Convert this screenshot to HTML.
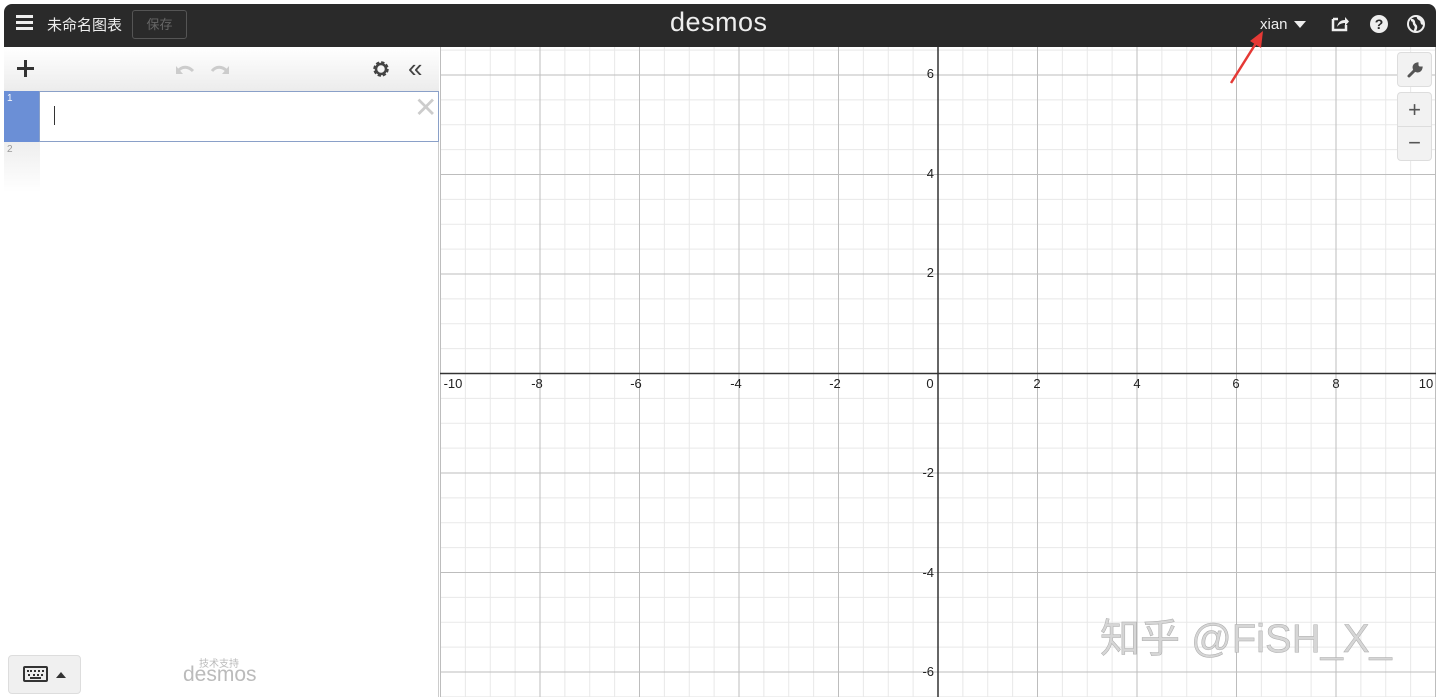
<!DOCTYPE html>
<html><head><meta charset="utf-8"><style>
*{margin:0;padding:0;box-sizing:border-box}
body{width:1440px;height:697px;overflow:hidden;background:#fff;font-family:"Liberation Sans","Noto Sans CJK SC",sans-serif;position:relative}
.top{position:absolute;left:4px;top:4px;width:1432px;height:43px;background:#2a2a2a;border-radius:8px 8px 0 0}
.left{position:absolute;left:4px;top:47px;width:435px;height:650px;background:#fff;border-right:1px solid #ccc}
.tb{position:absolute;left:0;top:0;width:435px;height:44px;background:linear-gradient(#fff,#ececec)}
.graph{position:absolute;left:440px;top:47px;width:996px;height:650px}
</style></head><body>
<div class="top">
  <div style="position:absolute;left:12px;top:11px;width:17px;height:3px;background:#eee;box-shadow:0 6px 0 #eee,0 12px 0 #eee"></div>
  <div style="position:absolute;left:43px;top:10px;color:#eee;font-size:15px">未命名图表</div>
  <div style="position:absolute;left:128px;top:6px;width:55px;height:29px;border:1px solid #555;border-radius:3px;color:#666;font-size:13px;text-align:center;line-height:27px">保存</div>
  <div style="position:absolute;left:666px;top:3px;color:#eee;font-size:27px;letter-spacing:0.5px">desmos</div>
  <div style="position:absolute;left:1256px;top:12px;color:#eee;font-size:15px">xian</div>
  <div style="position:absolute;left:1290px;top:17px;border-left:6px solid transparent;border-right:6px solid transparent;border-top:7px solid #eee"></div>
  <svg style="position:absolute;left:1326px;top:10px" width="20" height="20" viewBox="0 0 20 20"><path d="M3 5h5M3 5v11h13v-5" stroke="#eee" stroke-width="2.5" fill="none"/><path d="M7 13c1-5 4-7 8-7V3l4 4.5-4 4.5V9c-3 0-6 1-8 4z" fill="#eee"/></svg>
  <svg style="position:absolute;left:1365px;top:10px" width="20" height="20"><circle cx="10" cy="10" r="9" fill="#eee"/><text x="10" y="15" text-anchor="middle" font-size="14" font-weight="bold" fill="#2a2a2a" font-family="Liberation Sans">?</text></svg>
  <svg style="position:absolute;left:1402px;top:10px" width="20" height="20"><circle cx="10" cy="10" r="8" fill="none" stroke="#eee" stroke-width="2"/><path d="M5 6c2 0 3 1 3 3s2 2 2 4-1 3-1 4M12 3c0 2 2 2 3 3s0 3 2 4" stroke="#eee" stroke-width="2.5" fill="none"/></svg>
</div>
<div class="left">
  <div class="tb">
    <div style="position:absolute;left:13px;top:20px;width:17px;height:3px;background:#333"></div>
    <div style="position:absolute;left:20px;top:13px;width:3px;height:17px;background:#333"></div>
    <svg style="position:absolute;left:170px;top:12px" width="60" height="20"><path d="M4 12c4-5 10-5 15 0" stroke="#ccc" stroke-width="3" fill="none"/><path d="M2 7v8h7z" fill="#ccc"/><path d="M38 12c4-5 10-5 15 0" stroke="#ccc" stroke-width="3" fill="none"/><path d="M55 7v8h-7z" fill="#ccc"/></svg>
    <svg style="position:absolute;left:368px;top:13px" width="18" height="18" viewBox="0 0 18 18"><circle cx="9" cy="9" r="6" fill="none" stroke="#444" stroke-width="3.5" stroke-dasharray="3 1.7"/><circle cx="9" cy="9" r="5" fill="none" stroke="#444" stroke-width="2.5"/></svg>
    <div style="position:absolute;left:404px;top:6px;color:#444;font-size:26px">«</div>
  </div>
  <div style="position:absolute;left:0;top:44px;width:36px;height:51px;background:#6b8fd6"></div>
  <div style="position:absolute;left:3px;top:46px;color:#fff;font-size:10px">1</div>
  <div style="position:absolute;left:35px;top:44px;width:400px;height:51px;border:1px solid #8aa0c8;background:#fff"></div>
  <div style="position:absolute;left:50px;top:59px;width:1px;height:19px;background:#333"></div>
  <div style="position:absolute;left:410px;top:44px;color:#ccc;font-size:28px">✕</div>
  <div style="position:absolute;left:0;top:95px;width:36px;height:50px;background:linear-gradient(#eee,#fff)"></div>
  <div style="position:absolute;left:3px;top:97px;color:#999;font-size:10px">2</div>
  <div style="position:absolute;left:4px;top:608px;width:73px;height:39px;background:#f0f0f0;border:1px solid #ddd;border-radius:4px"></div>
  <div style="position:absolute;left:19px;top:619px;width:25px;height:16px;border:2px solid #333;border-radius:2px;background:#eee">
    <div style="margin:2px 2px 0;height:2px;border-top:2px dotted #333"></div>
    <div style="margin:2px 3px 0;height:2px;border-top:2px dotted #333"></div>
    <div style="margin:1px 5px 0;height:2px;background:#333"></div>
  </div>
  <div style="position:absolute;left:52px;top:625px;border-left:5px solid transparent;border-right:5px solid transparent;border-bottom:6px solid #333"></div>
  <div style="position:absolute;left:195px;top:608px;color:#bbb;font-size:10px">技术支持</div>
  <div style="position:absolute;left:179px;top:616px;color:#bbb;font-size:21px">desmos</div>
</div>
<svg class="graph" width="996" height="650" viewBox="440 47 996 650">
  <defs>
    <pattern id="mn" x="937.5" y="373" width="24.875" height="24.875" patternUnits="userSpaceOnUse"><path d="M0.5 0V24.875M0 0.5H24.875" stroke="#e8e8e8" stroke-width="1"/></pattern>
    <pattern id="mj" x="937.5" y="373" width="99.5" height="99.5" patternUnits="userSpaceOnUse"><path d="M0.5 0V99.5M0 0.5H99.5" stroke="#bdbdbd" stroke-width="1"/></pattern>
  </defs>
  <rect x="440" y="47" width="996" height="650" fill="#fff"/>
  <rect x="440" y="47" width="996" height="650" fill="url(#mn)"/>
  <rect x="440" y="47" width="996" height="650" fill="url(#mj)"/>
  <line x1="440" y1="373.5" x2="1436" y2="373.5" stroke="#333" stroke-width="1.5"/>
  <line x1="938" y1="47" x2="938" y2="697" stroke="#333" stroke-width="1.5"/>
  <g font-family="Liberation Sans" font-size="13" fill="#222" text-anchor="middle">
    <text x="453" y="388">-10</text><text x="537" y="388">-8</text><text x="636" y="388">-6</text><text x="736" y="388">-4</text><text x="835" y="388">-2</text><text x="930" y="388">0</text><text x="1037" y="388">2</text><text x="1137" y="388">4</text><text x="1236" y="388">6</text><text x="1336" y="388">8</text><text x="1426" y="388">10</text>
  </g>
  <g font-family="Liberation Sans" font-size="13" fill="#222" text-anchor="end">
    <text x="934" y="78">6</text><text x="934" y="178">4</text><text x="934" y="277">2</text><text x="934" y="477">-2</text><text x="934" y="577">-4</text><text x="934" y="676">-6</text>
  </g>
  <text x="1100" y="652" font-family="Liberation Sans,Noto Sans CJK SC,sans-serif" font-size="40" fill="#d6d6d6" stroke="#aaa" stroke-width="0.5">知乎 @FiSH_X_</text>
</svg>
<svg style="position:absolute;left:1220px;top:25px" width="50" height="65"><path d="M11 58L38 15" stroke="#e53935" stroke-width="2.5"/><path d="M43 6l-2 17-11-7z" fill="#e53935"/></svg>
<div style="position:absolute;left:1397px;top:52px;width:35px;height:35px;background:#f2f2f2;border:1px solid #ddd;border-radius:4px;color:#555;font-size:18px;text-align:center;line-height:33px">
<svg width="18" height="18" viewBox="0 0 18 18" style="vertical-align:middle"><path d="M3 15l7-7M11 3a3.5 3.5 0 1 0 4 4l-2 0-2-2z" stroke="#555" stroke-width="3" fill="#555" stroke-linecap="round"/></svg></div>
<div style="position:absolute;left:1397px;top:92px;width:35px;height:69px;background:#f2f2f2;border:1px solid #ddd;border-radius:4px;color:#555;font-size:22px;text-align:center">
<div style="height:34px;line-height:34px;border-bottom:1px solid #ddd">+</div><div style="height:34px;line-height:32px">−</div></div>
</body></html>
